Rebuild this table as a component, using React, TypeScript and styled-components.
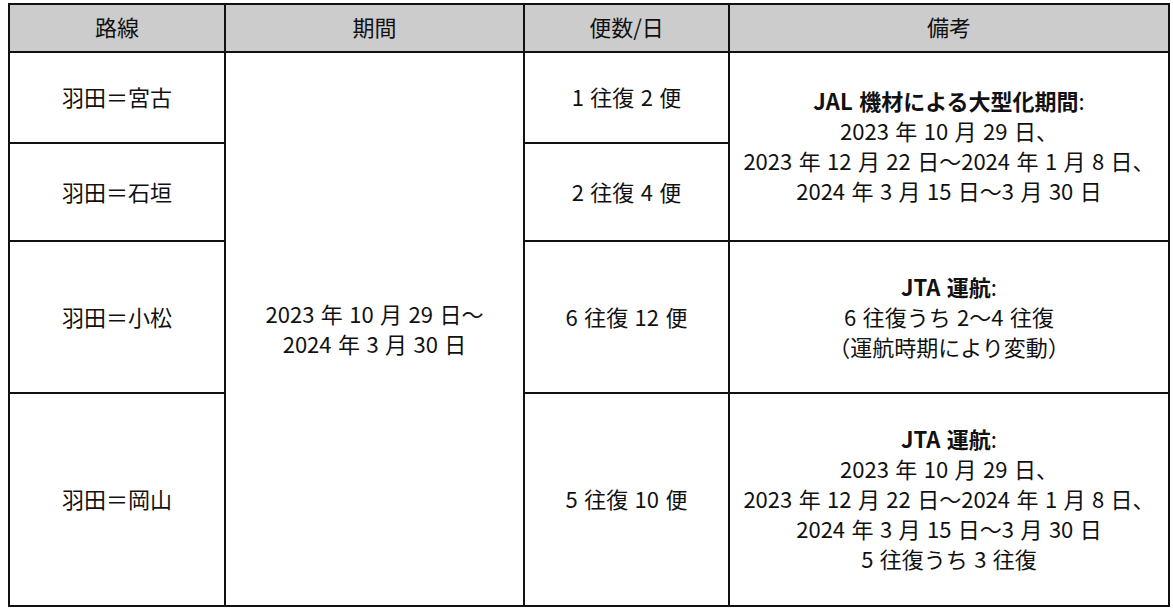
import styled, { createGlobalStyle } from 'styled-components';

const GlobalStyle = createGlobalStyle`
  html, body {
    margin: 0;
    padding: 0;
    background: #ffffff;
  }
  body {
    font-family: 'Liberation Sans Narrow', 'Noto Sans CJK JP', sans-serif;
    color: #111;
  }
`;

const Page = styled.div`
  padding: 3px 0 0 8px;
`;

const Table = styled.table`
  border-collapse: collapse;
  table-layout: fixed;
  width: 1160px;
  font-size: 22px;
  line-height: 30px;
  word-spacing: 1.5px;
`;

const Col = styled.col<{ $w: number }>`
  width: ${(p) => p.$w}px;
`;

const HeadCell = styled.th`
  height: 42px;
  padding: 0 0 4px;
  background: #cccccc;
  border: 2px solid #111;
  font-weight: normal;
  text-align: center;
  vertical-align: middle;
`;

const Row = styled.tr<{ $h: number }>`
  height: ${(p) => p.$h}px;
`;

const Cell = styled.td`
  padding: 0 0 3px;
  border: 2px solid #111;
  text-align: center;
  vertical-align: middle;
  white-space: nowrap;
`;

const Lead = styled.span`
  font-weight: bold;
`;

const Line = styled.div``;

export default function App() {
  return (
    <Page>
      <GlobalStyle />
      <Table>
        <colgroup>
          <Col $w={216} />
          <Col $w={299} />
          <Col $w={205} />
          <Col $w={440} />
        </colgroup>
        <thead>
          <tr>
            <HeadCell>路線</HeadCell>
            <HeadCell>期間</HeadCell>
            <HeadCell>便数/日</HeadCell>
            <HeadCell>備考</HeadCell>
          </tr>
        </thead>
        <tbody>
          <Row $h={91}>
            <Cell>羽田＝宮古</Cell>
            <Cell rowSpan={4}>
              <Line>2023 年 10 月 29 日～</Line>
              <Line>2024 年 3 月 30 日</Line>
            </Cell>
            <Cell>1 往復 2 便</Cell>
            <Cell rowSpan={2}>
              <Line>
                <Lead>JAL 機材による大型化期間</Lead>:
              </Line>
              <Line>2023 年 10 月 29 日、</Line>
              <Line>2023 年 12 月 22 日～2024 年 1 月 8 日、</Line>
              <Line>2024 年 3 月 15 日～3 月 30 日</Line>
            </Cell>
          </Row>
          <Row $h={98}>
            <Cell>羽田＝石垣</Cell>
            <Cell>2 往復 4 便</Cell>
          </Row>
          <Row $h={152}>
            <Cell>羽田＝小松</Cell>
            <Cell>6 往復 12 便</Cell>
            <Cell>
              <Line>
                <Lead>JTA 運航</Lead>:
              </Line>
              <Line>6 往復うち 2～4 往復</Line>
              <Line>（運航時期により変動）</Line>
            </Cell>
          </Row>
          <Row $h={213}>
            <Cell>羽田＝岡山</Cell>
            <Cell>5 往復 10 便</Cell>
            <Cell>
              <Line>
                <Lead>JTA 運航</Lead>:
              </Line>
              <Line>2023 年 10 月 29 日、</Line>
              <Line>2023 年 12 月 22 日～2024 年 1 月 8 日、</Line>
              <Line>2024 年 3 月 15 日～3 月 30 日</Line>
              <Line>5 往復うち 3 往復</Line>
            </Cell>
          </Row>
        </tbody>
      </Table>
    </Page>
  );
}
